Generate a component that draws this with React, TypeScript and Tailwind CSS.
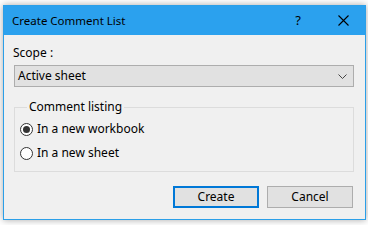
import { useState } from 'react';

function Radio({ checked, label, onClick }: { checked: boolean; label: string; onClick: () => void }) {
  return (
    <div className="flex items-center h-[24px] cursor-default" onClick={onClick}>
      <span className="w-[13px] h-[13px] rounded-full border border-[#333333] bg-white flex items-center justify-center">
        {checked && <span className="w-[7px] h-[7px] rounded-full bg-[#333333]" />}
      </span>
      <span className="ml-[4px] text-[12px] text-black">{label}</span>
    </div>
  );
}

export default function App() {
  const [mode, setMode] = useState<'workbook' | 'sheet'>('workbook');

  return (
    <div className="w-[368px] h-[225px] bg-white pt-[5px] pl-[3px] font-['Noto_Sans',sans-serif] overflow-hidden">
      <div className="w-[363px] h-[215px] border border-[#2b9fe8] bg-[#f0f0f0] flex flex-col shadow-[0_0_7px_rgba(0,0,0,0.35)]">
        {/* title bar */}
        <div className="h-[29px] bg-[#2ba1ee] flex items-center pl-[8px] text-[11.5px] text-black">
          <span className="flex-1">Create Comment List</span>
          <span className="w-[20px] text-center text-[13px]">?</span>
          <span className="w-[44px] ml-[13px] flex justify-center">
            <svg width="11" height="11" viewBox="0 0 11 11">
              <path d="M0.5 0.5 L10.5 10.5 M10.5 0.5 L0.5 10.5" stroke="#000" strokeWidth="1.1" />
            </svg>
          </span>
        </div>

        {/* body */}
        <div className="flex-1 pl-[10px] pr-[11px] text-[12px] text-black">
          <div className="mt-[9px] ml-[-1px] h-[17px] leading-[17px]">Scope :</div>
          <div className="mt-[4px] h-[22px] border border-[#adadad] bg-[#e1e1e1] flex items-center pl-[3px] pr-[6px]">
            <span className="flex-1 text-[12px]">Active sheet</span>
            <svg width="9" height="5" viewBox="0 0 9 5">
              <path d="M0.5 0.5 L4.5 4.5 L8.5 0.5" stroke="#444" fill="none" strokeWidth="1" />
            </svg>
          </div>

          <fieldset className="mt-[13px] h-[72px] border border-[#dcdcdc] pl-[5px]">
            <legend className="ml-[7px] px-[2px] text-[12px] leading-[14px]">Comment listing</legend>
            <div className="mt-[3px]">
              <Radio checked={mode === 'workbook'} label="In a new workbook" onClick={() => setMode('workbook')} />
              <Radio checked={mode === 'sheet'} label="In a new sheet" onClick={() => setMode('sheet')} />
            </div>
          </fieldset>

          <div className="mt-[14px] flex justify-end gap-[8px] mr-[1px]">
            <button className="w-[86px] h-[22px] border-2 border-[#0078d7] bg-[#e1e1e1] text-[12px] leading-none">
              Create
            </button>
            <button className="w-[86px] h-[22px] border border-[#adadad] bg-[#e1e1e1] text-[12px] leading-none">
              Cancel
            </button>
          </div>
        </div>
      </div>
    </div>
  );
}
